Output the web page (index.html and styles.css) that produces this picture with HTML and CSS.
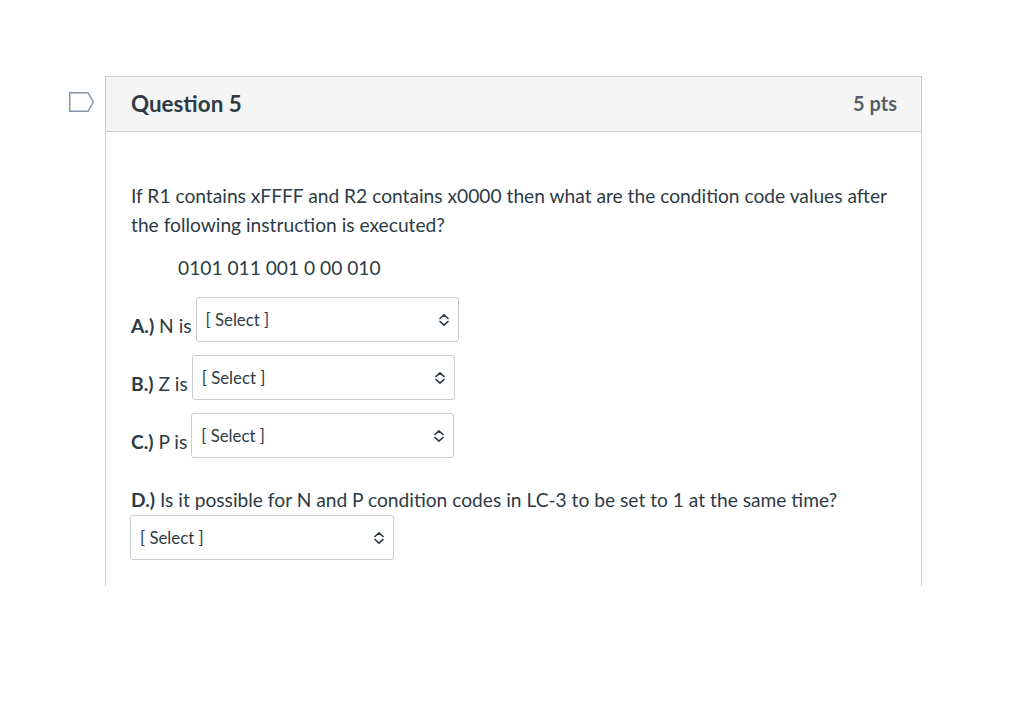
FILE: index.html
```html
<!DOCTYPE html>
<html>
<head>
<meta charset="utf-8">
<link rel="stylesheet" href="styles.css">
</head>
<body>
<div class="page">
  <div class="flag">
    <svg width="28" height="22" viewBox="0 0 28 22"><path d="M1.7 1.7 H20 L25.3 11 L20 20.3 H1.7 Z" fill="none" stroke="#8294a8" stroke-width="1.5" stroke-linejoin="miter"/></svg>
  </div>
  <div class="card">
    <div class="card-header">
      <span class="title">Question 5</span>
      <span class="pts">5 pts</span>
    </div>
    <div class="card-body">
      <p class="prompt">If R1 contains xFFFF and R2 contains x0000 then what are the condition code values after the following instruction is executed?</p>
      <p class="code">0101 011 001 0 00 010</p>
      <div class="answer"><span class="label"><b>A.)</b> N is</span><div class="select"><span>[ Select ]</span><svg class="arr" width="12" height="14" viewBox="0 0 12 14"><path d="M2 5.5 L6 1.8 L10 5.5 M2 8.5 L6 12.2 L10 8.5" fill="none" stroke="#2d3b45" stroke-width="1.7" stroke-linecap="round" stroke-linejoin="round"/></svg></div></div>
      <div class="answer"><span class="label"><b>B.)</b> Z is</span><div class="select"><span>[ Select ]</span><svg class="arr" width="12" height="14" viewBox="0 0 12 14"><path d="M2 5.5 L6 1.8 L10 5.5 M2 8.5 L6 12.2 L10 8.5" fill="none" stroke="#2d3b45" stroke-width="1.7" stroke-linecap="round" stroke-linejoin="round"/></svg></div></div>
      <div class="answer"><span class="label"><b>C.)</b> P is</span><div class="select"><span>[ Select ]</span><svg class="arr" width="12" height="14" viewBox="0 0 12 14"><path d="M2 5.5 L6 1.8 L10 5.5 M2 8.5 L6 12.2 L10 8.5" fill="none" stroke="#2d3b45" stroke-width="1.7" stroke-linecap="round" stroke-linejoin="round"/></svg></div></div>
      <p class="q-d"><b>D.)</b> Is it possible for N and P condition codes in LC-3 to be set to 1 at the same time?</p>
      <div class="select d"><span>[ Select ]</span><svg class="arr" width="12" height="14" viewBox="0 0 12 14"><path d="M2 5.5 L6 1.8 L10 5.5 M2 8.5 L6 12.2 L10 8.5" fill="none" stroke="#2d3b45" stroke-width="1.7" stroke-linecap="round" stroke-linejoin="round"/></svg></div>
    </div>
  </div>
</div>
</body>
</html>
```
FILE: styles.css
```css
html, body {
  margin: 0;
  padding: 0;
  background: #fff;
}
body {
  font-family: Lato, "Open Sans", sans-serif;
  color: #2d3b45;
}
.page {
  position: relative;
  padding: 76px 0 0 105px;
  height: 648px;
}
.flag {
  position: absolute;
  left: 68px;
  top: 91px;
}
.card {
  width: 817px;
  height: 510px;
  border: 1px solid #c7cdd1;
  border-bottom: none;
  box-sizing: border-box;
}
.card-header {
  height: 55px;
  background: #f5f5f5;
  border-bottom: 1px solid #c7cdd1;
  box-sizing: border-box;
  display: flex;
  align-items: center;
  justify-content: space-between;
  padding: 0 24px 2px 25px;
}
.title {
  font-size: 22.4px;
  font-weight: 700;
  color: #2d3b45;
}
.pts {
  font-size: 20px;
  font-weight: 700;
  color: #555f66;
}
.card-body {
  padding: 49px 25px 0 25px;
  font-size: 19.2px;
}
.prompt {
  margin: 0;
  line-height: 29px;
}
.code {
  margin: 14px 0 0 47px;
  line-height: 29px;
}
.answer {
  display: flex;
  align-items: flex-end;
  margin-top: 15px;
  height: 45px;
}
.answer + .answer {
  margin-top: 13px;
}
.label {
  line-height: 29px;
  padding-bottom: 2px;
  margin-right: 4px;
}
.select {
  width: 263px;
  height: 45px;
  border: 1px solid #c7cdd1;
  border-radius: 3px;
  box-sizing: border-box;
  display: flex;
  align-items: center;
  justify-content: space-between;
  padding: 0 8px 1px 9px;
  font-size: 16.8px;
  color: #2d3b45;
}
.arr {
  margin-top: 1px;
}
.q-d {
  margin: 27px 0 0 0;
  line-height: 29px;
}
.select.d {
  width: 264px;
  margin-top: 1px;
  margin-left: -1px;
  padding-bottom: 0;
}
.d .arr {
  margin-top: 0;
}
```
